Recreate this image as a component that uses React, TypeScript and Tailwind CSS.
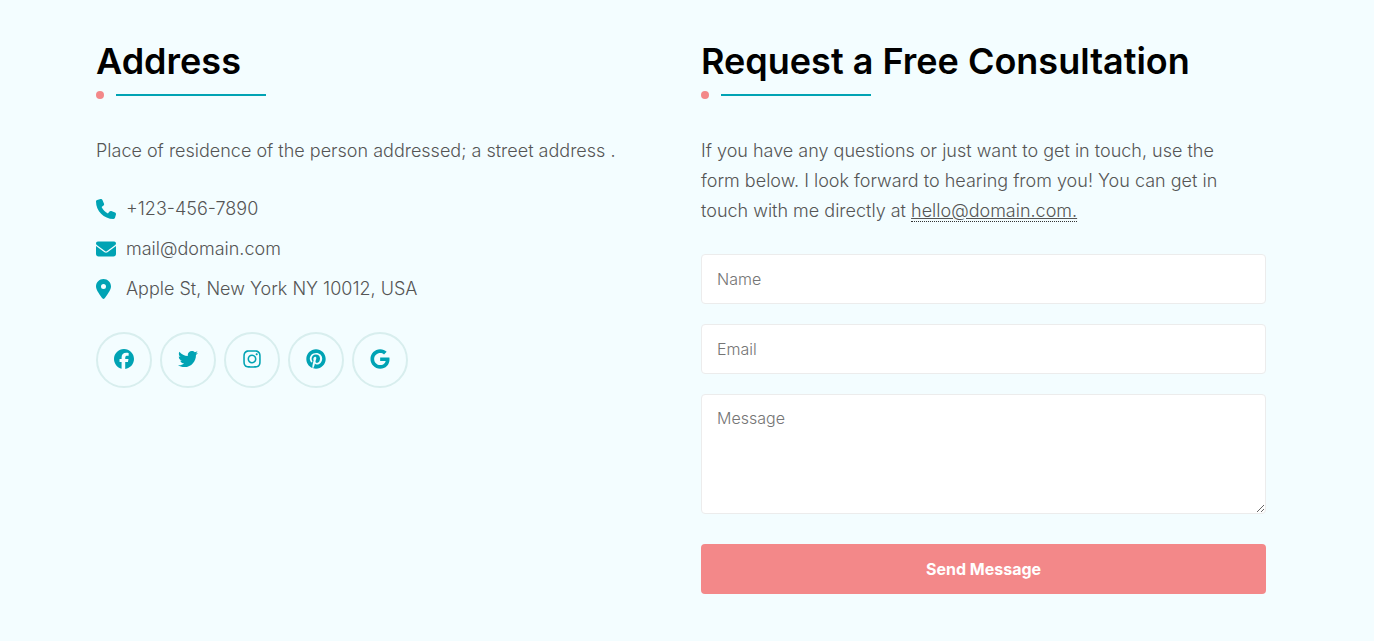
import type { ReactNode } from "react";
import { FaEnvelope, FaFacebook, FaGoogle, FaInstagram, FaLocationDot, FaPhone, FaPinterest, FaTwitter } from "react-icons/fa6";

const contacts = [
  { icon: <FaPhone />, text: "+123-456-7890" },
  { icon: <FaEnvelope />, text: "mail@domain.com" },
  { icon: <FaLocationDot className="h-5 w-[15px]" />, text: "Apple St, New York NY 10012, USA" },
];

const socials = [
  { name: "Facebook", icon: <FaFacebook /> },
  { name: "Twitter", icon: <FaTwitter /> },
  { name: "Instagram", icon: <FaInstagram /> },
  { name: "Pinterest", icon: <FaPinterest /> },
  { name: "Google", icon: <FaGoogle /> },
];

const fieldClass =
  "block w-full rounded border border-[#ececec] bg-white px-[15px] text-base font-light text-[#555] placeholder:text-[#757575] outline-none focus:border-[#00a3b4]";

function SectionTitle({ children }: { children: ReactNode }) {
  return (
    <div className="mb-[37px]">
      <h2 className="text-4xl leading-[42px] font-semibold text-black">{children}</h2>
      <div className="mt-[9px] flex items-center gap-3">
        <span className="size-2 rounded-full bg-[#f38889]"></span>
        <span className="h-0.5 w-[150px] bg-[#00a3b4]"></span>
      </div>
    </div>
  );
}

export default function App() {
  return (
    <section className="min-h-screen bg-[#f3fdff] py-10 pl-5 pr-8 font-['Inter',sans-serif] text-lg leading-[30px] font-light text-[#555]">
      <div className="mx-auto grid max-w-[1170px] gap-10 md:grid-cols-2">
        {/* Address */}
        <div>
          <SectionTitle>Address</SectionTitle>
          <p>Place of residence of the person addressed; a street address .</p>

          <ul className="mt-7 space-y-2.5">
            {contacts.map((item) => (
              <li key={item.text} className="flex items-center gap-2.5">
                <span className="w-5 shrink-0 text-xl text-[#00a3b4]">{item.icon}</span>
                {item.text}
              </li>
            ))}
          </ul>

          <div className="mt-7 flex gap-2">
            {socials.map((item) => (
              <a
                key={item.name}
                href="#"
                aria-label={item.name}
                className="flex size-14 items-center justify-center rounded-full border-2 border-[#d8eeee] pb-0.5 text-xl text-[#00a3b4]"
              >
                {item.icon}
              </a>
            ))}
          </div>
        </div>

        {/* Contact form */}
        <div>
          <SectionTitle>Request a Free Consultation</SectionTitle>
          <p className="max-w-[540px]">
            If you have any questions or just want to get in touch, use the form below. I look forward to hearing from
            you! You can get in touch with me directly at{" "}
            <a href="mailto:hello@domain.com" className="border-b border-dotted border-[#333] underline">
              hello@domain.com.
            </a>
          </p>

          <form className="mt-7" onSubmit={(e) => e.preventDefault()}>
            <input type="text" placeholder="Name" aria-label="Name" className={`${fieldClass} mb-5 h-[50px]`} />
            <input type="email" placeholder="Email" aria-label="Email" className={`${fieldClass} mb-5 h-[50px]`} />
            <textarea placeholder="Message" aria-label="Message" className={`${fieldClass} h-[120px] resize py-[11px]`} />
            <button
              type="submit"
              className="mt-[30px] block h-[50px] w-full rounded bg-[#f38889] text-base font-bold text-white"
            >
              Send Message
            </button>
          </form>
        </div>
      </div>
    </section>
  );
}
